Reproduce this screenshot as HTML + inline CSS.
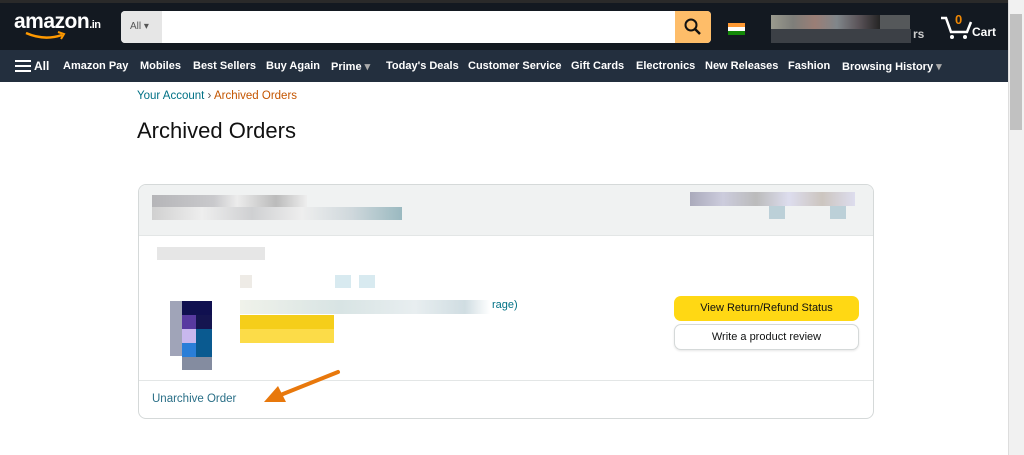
<!DOCTYPE html>
<html><head><style>
*{margin:0;padding:0;box-sizing:border-box}
body{width:1024px;height:455px;overflow:hidden;background:#fff;font-family:"Liberation Sans",sans-serif;position:relative}
.a{position:absolute}
.top{left:0;top:0;width:1008px;height:50px;background:#131921;border-top:3px solid #2a2a2a}
.nav{left:0;top:50px;width:1008px;height:32px;background:#232f3e;color:#fff;font-size:11px;font-weight:bold}
.nav span{position:absolute;top:10px;white-space:nowrap}
.sb{left:1008px;top:0;width:16px;height:455px;background:#f1f1f1;border-left:1px solid #ddd}
.px{position:absolute}
</style></head><body>
<div class="a top"></div>
<div class="a" style="left:14px;top:10px;color:#fff;font-size:21px;font-weight:bold;letter-spacing:-0.5px">amazon<span style="font-size:11px">.in</span></div>
<svg class="a" style="left:24px;top:30px" width="44" height="12"><path d="M2 3 Q20 11 38 5" stroke="#f90" stroke-width="2.5" fill="none"/><path d="M34 2 L40 4 L37 9" stroke="#f90" stroke-width="2" fill="none"/></svg>
<div class="a" style="left:121px;top:11px;width:590px;height:32px;background:#fff;border-radius:4px;overflow:hidden">
 <div class="a" style="left:0;top:0;width:41px;height:32px;background:#e6e6e6;color:#555;font-size:10px;padding:10px 0 0 9px">All ▾</div>
 <div class="a" style="left:554px;top:0;width:36px;height:32px;background:#febd69"></div>
 <svg class="a" style="left:563px;top:7px" width="18" height="18"><circle cx="7" cy="7" r="5.5" stroke="#111" stroke-width="2" fill="none"/><path d="M11 11 L16 16" stroke="#111" stroke-width="2.5"/></svg>
</div>
<div class="a" style="left:728px;top:23px;width:17px;height:4px;background:#f93"></div>
<div class="a" style="left:728px;top:27px;width:17px;height:4px;background:#fff"></div>
<div class="a" style="left:728px;top:31px;width:17px;height:4px;background:#138808"></div>
<div class="a" style="left:771px;top:15px;width:110px;height:14px;background:linear-gradient(90deg,#9a9a8e,#7e7e7a,#9a7e76,#80868a,#5a5358,#222)"></div>
<div class="a" style="left:771px;top:29px;width:140px;height:14px;background:#3c4046"></div>
<div class="a" style="left:880px;top:15px;width:30px;height:14px;background:#55585a"></div>
<div class="a" style="left:913px;top:27px;color:#ccc;font-size:12px;font-weight:bold">rs</div>
<svg class="a" style="left:940px;top:14px" width="34" height="26"><path d="M1 4 L6 4 L11 18 L27 18 L31 8" stroke="#fff" stroke-width="2.5" fill="none"/><circle cx="12" cy="23" r="2" fill="#fff"/><circle cx="25" cy="23" r="2" fill="#fff"/></svg>
<div class="a" style="left:955px;top:12px;color:#f08804;font-size:13px;font-weight:bold">0</div>
<div class="a" style="left:972px;top:25px;color:#fff;font-size:12px;font-weight:bold">Cart</div>
<div class="a nav">
<svg style="position:absolute;left:15px;top:9px" width="16" height="14"><path d="M0 2H16M0 7H16M0 12H16" stroke="#fff" stroke-width="2"/></svg>
<span style="left:34px;font-size:12px;top:9px">All</span><span style="left:63px">Amazon Pay</span><span style="left:140px">Mobiles</span><span style="left:193px">Best Sellers</span><span style="left:266px">Buy Again</span><span style="left:331px">Prime <span style="position:static;color:#aaa">▾</span></span><span style="left:386px">Today's Deals</span><span style="left:468px">Customer Service</span><span style="left:571px">Gift Cards</span><span style="left:636px">Electronics</span><span style="left:705px">New Releases</span><span style="left:788px">Fashion</span><span style="left:842px">Browsing History <span style="position:static;color:#aaa">▾</span></span>
</div>
<div class="a sb"></div>
<div class="a" style="left:1010px;top:14px;width:12px;height:116px;background:#c1c1c1"></div>
<div class="a" style="left:137px;top:90px;font-size:11.5px;color:#007185">Your Account <span style="color:#555">›</span> <span style="color:#c45500">Archived Orders</span></div>
<div class="a" style="left:137px;top:118px;font-size:22px;color:#111">Archived Orders</div>
<div class="a" style="left:138px;top:184px;width:736px;height:235px;border:1px solid #d5d9d9;border-radius:8px;overflow:hidden">
 <div class="a" style="left:0;top:0;width:736px;height:51px;background:#f0f2f2;border-bottom:1px solid #e3e6e6"></div>
 <div class="a" style="left:0;top:195px;width:736px;height:1px;background:#e3e6e6"></div>
</div>
<div class="px" style="left:152px;top:195px;width:155px;height:14px;background:linear-gradient(90deg,#b5b5b8,#c9c9cc 40%,#ececec 55%,#bbb 80%,#eee)"></div>
<div class="px" style="left:152px;top:207px;width:250px;height:13px;background:linear-gradient(90deg,#d0d0d0,#eee 20%,#cfd0d2 40%,#eee 60%,#cfd8dc 80%,#9ab9c0)"></div>
<div class="px" style="left:690px;top:192px;width:165px;height:14px;background:linear-gradient(90deg,#aab,#ccd,#bbb,#dde,#ccc5bf,#dde)"></div>
<div class="px" style="left:769px;top:206px;width:16px;height:13px;background:#bcd0d8"></div>
<div class="px" style="left:830px;top:206px;width:16px;height:13px;background:#bcd0d8"></div>
<div class="px" style="left:157px;top:247px;width:108px;height:13px;background:#e6e6e6"></div>
<div class="px" style="left:240px;top:275px;width:12px;height:13px;background:#eeebe6"></div>
<div class="px" style="left:335px;top:275px;width:40px;height:13px;background:linear-gradient(90deg,#d8eaf0 40%,#fff 40%,#fff 60%,#d8eaf0 60%)"></div>
<div class="px" style="left:240px;top:300px;width:250px;height:14px;background:linear-gradient(90deg,#f0f2ea,#d8e4e4 40%,#e8eef0 70%,#d0dde2 90%,#fff)"></div>
<div class="a" style="left:492px;top:299px;font-size:11px;color:#007185">rage)</div>
<div class="px" style="left:240px;top:315px;width:94px;height:14px;background:#f5ce1a"></div>
<div class="px" style="left:240px;top:329px;width:94px;height:14px;background:#fcdc48"></div>
<div class="px" style="left:170px;top:301px;width:12px;height:55px;background:#a0a4b8"></div>
<div class="px" style="left:182px;top:301px;width:30px;height:14px;background:#101050"></div>
<div class="px" style="left:182px;top:315px;width:14px;height:14px;background:#583aa0"></div>
<div class="px" style="left:196px;top:315px;width:16px;height:14px;background:#151550"></div>
<div class="px" style="left:182px;top:329px;width:14px;height:14px;background:#c8b8ee"></div>
<div class="px" style="left:196px;top:329px;width:16px;height:28px;background:#0a5a90"></div>
<div class="px" style="left:182px;top:343px;width:14px;height:14px;background:#2a7ed8"></div>
<div class="px" style="left:182px;top:357px;width:30px;height:13px;background:#848ca0"></div>
<div class="a" style="left:674px;top:296px;width:185px;height:25px;background:#ffd814;border-radius:7px;font-size:11px;text-align:center;line-height:25px;color:#0f1111">View Return/Refund Status</div>
<div class="a" style="left:674px;top:324px;width:185px;height:26px;background:#fff;border:1px solid #d5d9d9;border-radius:7px;box-shadow:0 1px 2px rgba(0,0,0,.1);font-size:11px;text-align:center;line-height:24px;color:#0f1111">Write a product review</div>
<div class="a" style="left:152px;top:393px;font-size:11.5px;color:#2a6f87">Unarchive Order</div>
<svg class="a" style="left:260px;top:368px" width="82" height="38"><path d="M78 4 L18 28" stroke="#e8780c" stroke-width="4" stroke-linecap="round"/><path d="M4 34 L18 18 L26 34 Z" fill="#e8780c"/></svg>
</body></html>
